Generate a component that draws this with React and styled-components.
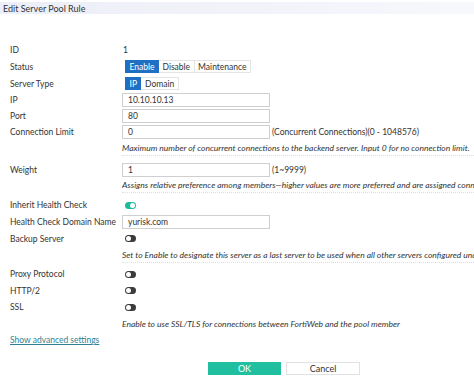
import React from "react";
import styled, { createGlobalStyle } from "styled-components";

const Global = createGlobalStyle`
  html, body { margin: 0; padding: 0; background: #fff; }
  body { font-family: Lato, "Open Sans", sans-serif; color: #333; font-size: 8.5px; overflow: hidden; }
  * { box-sizing: border-box; }
`;

const Page = styled.div`
  width: 474px;
  height: 379px;
  padding-top: 2px;
`;

const TitleBar = styled.div`
  height: 12px;
  display: flex;
  align-items: center;
  padding-left: 3px;
  font-size: 9px;
  color: #333;
  background: linear-gradient(90deg, #eceef8 0%, #f3f4fa 60%, #f7f8fc 100%);
`;

const Form = styled.div`
  padding-top: 27px;
  display: flex;
  flex-direction: column;
`;

const Row = styled.div`
  display: grid;
  grid-template-columns: 112px 1fr;
  align-items: center;
  height: ${(p) => p.$h || 17}px;
  margin-top: ${(p) => p.$mt || 0}px;
  padding-left: 10px;
  white-space: nowrap;
`;

const Label = styled.div`
  font-size: 8.5px;
  color: #333;
`;

const Content = styled.div`
  display: flex;
  align-items: center;
  gap: 2px;
`;

const Value = styled.span`
  padding-left: 1px;
`;

const Segmented = styled.div`
  display: flex;
  margin-left: 3px;
  height: 13px;
`;

const Seg = styled.div`
  display: flex;
  align-items: center;
  padding: 0 3.5px;
  font-size: 8.5px;
  border: 1px solid ${(p) => (p.$active ? "#1f6fc5" : "#e4e4e4")};
  border-left-width: ${(p) => (p.$first ? 1 : 0)}px;
  background: ${(p) => (p.$active ? "#1f6fc5" : "#fff")};
  color: ${(p) => (p.$active ? "#fff" : "#333")};
`;

const Input = styled.div`
  width: 148px;
  height: 14px;
  border: 1px solid #cfcfcf;
  display: flex;
  align-items: center;
  padding-left: 5px;
  font-size: 8.5px;
  color: #333;
`;

const Hint = styled.span`
  font-size: 8.5px;
  color: #333;
`;

const Help = styled.div`
  margin-left: 122px;
  height: ${(p) => p.$h || 16}px;
  display: flex;
  align-items: center;
  font-style: italic;
  font-size: 8.5px;
  color: #333;
  white-space: nowrap;
  overflow: hidden;
  border-bottom: ${(p) => (p.$line ? "1px dotted #dedede" : "none")};
`;

const Track = styled.div`
  margin-left: 3px;
  width: 11px;
  height: 7px;
  border-radius: 4px;
  background: ${(p) => (p.$on ? "#1abc9c" : "#3c3c3c")};
  position: relative;
`;

const Knob = styled.div`
  position: absolute;
  top: 1px;
  left: ${(p) => (p.$on ? 5 : 1)}px;
  width: 5px;
  height: 5px;
  border-radius: 50%;
  background: #fff;
`;

const Link = styled.a`
  display: block;
  padding-left: 10px;
  height: 16px;
  line-height: 16px;
  font-size: 8.5px;
  color: #2f7f95;
  text-decoration: underline;
`;

const Footer = styled.div`
  display: flex;
  gap: 5px;
  padding-left: 208px;
  margin-top: 14px;
`;

const Button = styled.div`
  width: ${(p) => (p.$primary ? 73 : 74)}px;
  height: 13px;
  display: flex;
  align-items: center;
  justify-content: center;
  font-size: 9px;
  background: ${(p) => (p.$primary ? "#1fbf9f" : "#fff")};
  color: ${(p) => (p.$primary ? "#fff" : "#333")};
  border: 1px solid ${(p) => (p.$primary ? "#1fbf9f" : "#e2e2e2")};
`;

const Toggle = ({ on }) => (
  <Track $on={on}>
    <Knob $on={on} />
  </Track>
);

export default function App() {
  return (
    <Page>
      <Global />
      <TitleBar>Edit Server Pool Rule</TitleBar>
      <Form>
        <Row>
          <Label>ID</Label>
          <Content><Value>1</Value></Content>
        </Row>
        <Row>
          <Label>Status</Label>
          <Content>
            <Segmented>
              <Seg $active $first>Enable</Seg>
              <Seg>Disable</Seg>
              <Seg>Maintenance</Seg>
            </Segmented>
          </Content>
        </Row>
        <Row>
          <Label>Server Type</Label>
          <Content>
            <Segmented>
              <Seg $active $first>IP</Seg>
              <Seg>Domain</Seg>
            </Segmented>
          </Content>
        </Row>
        <Row $h={16}>
          <Label>IP</Label>
          <Content><Input>10.10.10.13</Input></Content>
        </Row>
        <Row $h={16}>
          <Label>Port</Label>
          <Content><Input>80</Input></Content>
        </Row>
        <Row $h={16}>
          <Label>Connection Limit</Label>
          <Content>
            <Input>0</Input>
            <Hint>(Concurrent Connections)(0 - 1048576)</Hint>
          </Content>
        </Row>
        <Help $line>Maximum number of concurrent connections to the backend server. Input 0 for no connection limit.</Help>
        <Row $h={16} $mt={6}>
          <Label>Weight</Label>
          <Content>
            <Input>1</Input>
            <Hint>(1~9999)</Hint>
          </Content>
        </Row>
        <Help $line $h={15}>Assigns relative preference among members—higher values are more preferred and are assigned connections more frequently.</Help>
        <Row $h={16} $mt={4}>
          <Label>Inherit Health Check</Label>
          <Content><Toggle on /></Content>
        </Row>
        <Row $h={17}>
          <Label>Health Check Domain Name</Label>
          <Content><Input>yurisk.com</Input></Content>
        </Row>
        <Row $h={17}>
          <Label>Backup Server</Label>
          <Content><Toggle /></Content>
        </Row>
        <Help $line $h={16}>Set to Enable to designate this server as a last server to be used when all other servers configured under this pool are unavailable.</Help>
        <Row $h={16} $mt={3}>
          <Label>Proxy Protocol</Label>
          <Content><Toggle /></Content>
        </Row>
        <Row $h={17}>
          <Label>HTTP/2</Label>
          <Content><Toggle /></Content>
        </Row>
        <Row $h={16}>
          <Label>SSL</Label>
          <Content><Toggle /></Content>
        </Row>
        <Help $h={17}>Enable to use SSL/TLS for connections between FortiWeb and the pool member</Help>
        <Link>Show advanced settings</Link>
        <Footer>
          <Button $primary>OK</Button>
          <Button>Cancel</Button>
        </Footer>
      </Form>
    </Page>
  );
}
